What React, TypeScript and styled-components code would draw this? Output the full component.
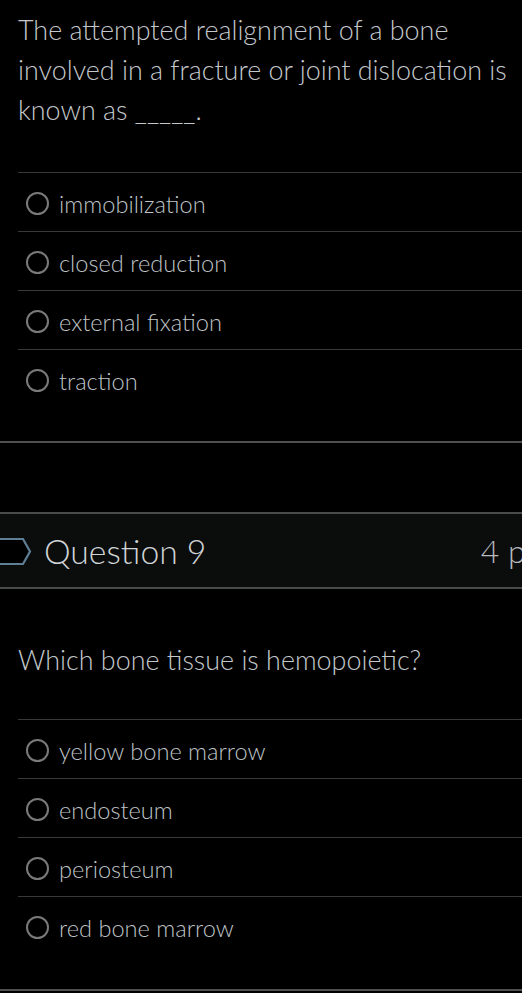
import React from "react";
import styled, { createGlobalStyle } from "styled-components";

const Global = createGlobalStyle`
  html, body { margin: 0; padding: 0; background: #000; }
  body { font-family: Lato, "Open Sans", sans-serif; -webkit-font-smoothing: antialiased; }
  #root { width: 522px; min-height: 993px; background: #000; overflow: hidden; }
`;

const Page = styled.div`
  display: flex;
  flex-direction: column;
  width: 522px;
`;

const QuestionBody = styled.section<{ $top: number; $gap: number; $bottom: number }>`
  display: flex;
  flex-direction: column;
  padding-top: ${(p) => p.$top}px;
  padding-bottom: ${(p) => p.$bottom}px;
  border-bottom: 2px solid #4f4f4f;
  gap: ${(p) => p.$gap}px;
`;

const QuestionText = styled.p`
  margin: 0;
  padding: 0 0 0 18px;
  font-size: 26.9px;
  line-height: 40px;
  color: #c4c8cc;
  font-weight: 300;
`;

const Answers = styled.ul`
  list-style: none;
  margin: 0 0 0 18px;
  padding: 0;
  display: flex;
  flex-direction: column;
`;

const Answer = styled.li`
  display: flex;
  align-items: center;
  gap: 10px;
  border-top: 1px solid #383838;
  padding-left: 8px;
  padding-top: 3px;
  box-sizing: border-box;
  height: 59px;
  font-size: 23.6px;
  font-weight: 300;
  color: #bfc3c7;
`;

const Radio = styled.span`
  width: 19px;
  height: 19px;
  border-radius: 50%;
  border: 2.5px solid #7a7a7a;
  flex: none;
`;

const Spacer = styled.div`
  height: 69px;
`;

const Header = styled.header`
  display: flex;
  align-items: center;
  height: 73px;
  background: #0b0c0c;
  border-top: 2px solid #4a4a4a;
  border-bottom: 2px solid #4a4a4a;
  box-sizing: content-box;
  overflow: hidden;
`;

const Flag = styled.svg`
  flex: none;
  margin-right: 12px;
  margin-top: 2px;
`;

const HeaderTitle = styled.h2`
  margin: 0;
  font-size: 33.7px;
  font-weight: 300;
  color: #d0d4d7;
  flex: 1;
  white-space: nowrap;
`;

const Points = styled.span`
  font-size: 32px;
  font-weight: 300;
  color: #b8bcc0;
  white-space: nowrap;
  margin-right: -28px;
`;

const q1 = ["immobilization", "closed reduction", "external fixation", "traction"];
const q2 = ["yellow bone marrow", "endosteum", "periosteum", "red bone marrow"];

export default function App() {
  return (
    <Page>
      <Global />
      <QuestionBody $top={10} $gap={42} $bottom={33}>
        <QuestionText>
          The attempted realignment of a bone involved in a fracture or joint dislocation is known as _____.
        </QuestionText>
        <Answers>
          {q1.map((a) => (
            <Answer key={a}>
              <Radio />
              {a}
            </Answer>
          ))}
        </Answers>
      </QuestionBody>
      <Spacer />
      <Header>
        <Flag width="32" height="30" viewBox="0 0 32 30">
          <path d="M-4 2 H23 L30 14.5 L23 27 H-4" fill="#000" stroke="#5f7f95" strokeWidth="2.2" strokeLinejoin="miter" />
        </Flag>
        <HeaderTitle>Question 9</HeaderTitle>
        <Points>4 pts</Points>
      </Header>
      <QuestionBody $top={51} $gap={39} $bottom={34}>
        <QuestionText>Which bone tissue is hemopoietic?</QuestionText>
        <Answers>
          {q2.map((a) => (
            <Answer key={a}>
              <Radio />
              {a}
            </Answer>
          ))}
        </Answers>
      </QuestionBody>
    </Page>
  );
}
